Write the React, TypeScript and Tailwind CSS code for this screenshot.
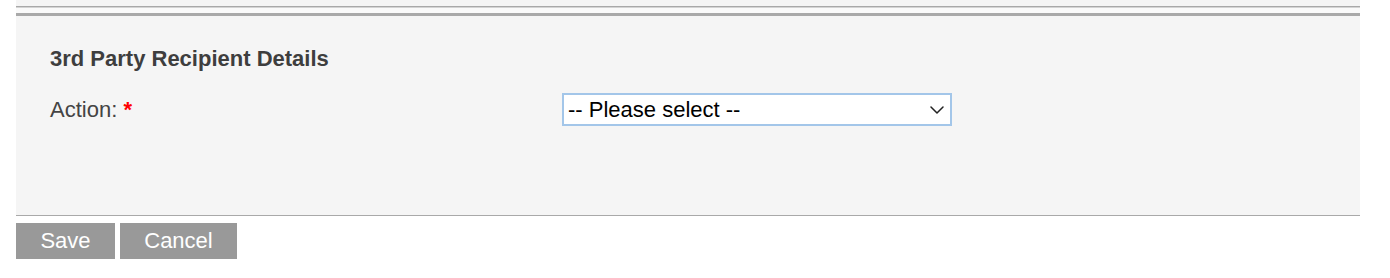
import React from 'react';

const ChevronDown: React.FC<{ className?: string }> = ({ className }) => (
  <svg viewBox="0 0 14 8" className={className} fill="none" stroke="currentColor" strokeWidth="1.5" strokeLinecap="round" strokeLinejoin="round">
    <path d="M1 1l6 6 6-6" />
  </svg>
);

export default function App() {
  return (
    <div className="w-[1344px] ml-4 bg-white text-[#444] font-['Liberation_Sans',Arial,sans-serif]">
      {/* section dividers above the panel */}
      <div className="h-[6px] bg-[#f5f5f5]" />
      <div className="h-px bg-[#a9a9a9]" />
      <div className="h-px bg-[#d4d4d4]" />
      <div className="h-[5px] bg-[#fafafa]" />
      <div className="h-[3px] bg-[#a9a9a9]" />

      <div className="bg-[#f5f5f5] border-b border-[#a9a9a9] pl-[34px] pt-[30px] pb-[89px]">
        <h3 className="text-[22px] leading-[26px] font-bold text-[#3e3e3e]">3rd Party Recipient Details</h3>
        <div className="mt-[21px] flex items-center">
          <label className="w-[512px] text-[22px] leading-[26px]">
            Action: <span className="text-[#ff0000] font-bold">*</span>
          </label>
          <div className="w-[390px] h-[33px] bg-white border-2 border-[#a3c6e9] flex items-center justify-between pl-[4px] pr-[6px]">
            <span className="text-[22px] leading-[26px] text-black">-- Please select --</span>
            <ChevronDown className="w-[14px] h-[8px] text-[#222]" />
          </div>
        </div>
      </div>

      <div className="mt-[7px] flex gap-[5px]">
        <button className="w-[99px] h-[36px] bg-[#999] text-white text-[22px] leading-[26px]">Save</button>
        <button className="w-[117px] h-[36px] bg-[#999] text-white text-[22px] leading-[26px]">Cancel</button>
      </div>
    </div>
  );
}
